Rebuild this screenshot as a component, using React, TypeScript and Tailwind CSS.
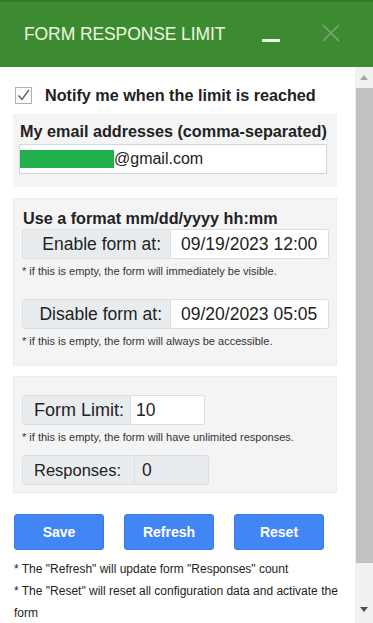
import React from "react";

const font = { fontFamily: '"Liberation Sans", Arial, sans-serif' };

function Group({ label, value, labelCls, valueCls }: { label: string; value: string; labelCls: string; valueCls: string }) {
  return (
    <div className="flex h-[30px] text-[#222] whitespace-nowrap">
      <div className={`${labelCls} shrink-0 flex items-center bg-[#e9ecef] border border-[#dcdfe2] rounded-l-[3px]`}>
        {label}
      </div>
      <div className={`${valueCls} shrink-0 flex items-center border border-l-0 border-[#dcdfe2] rounded-r-[3px]`}>
        {value}
      </div>
    </div>
  );
}

export default function App() {
  return (
    <div className="w-[373px] h-[623px] overflow-hidden bg-white flex flex-col" style={font}>
      <div className="h-[67px] shrink-0 bg-[#3d8b30] border-t-2 border-[#347a29] flex items-center pl-6 pr-[32px]">
        <div className="text-[17.5px] text-[#eef7e2] tracking-[-0.1px] mt-[-1px]">FORM RESPONSE LIMIT</div>
        <div className="flex-1" />
        <div className="w-[18px] h-[3px] bg-[#eef7e2] mt-[12px] mr-[41px]" />
        <svg width="20" height="20" viewBox="0 0 20 20" className="mt-[-3px]">
          <path d="M2 2 L18 18 M18 2 L2 18" stroke="#7fa57a" strokeWidth="1.6" />
        </svg>
      </div>
      <div className="flex flex-1 min-h-0">
        <div className="w-[355px] overflow-hidden text-[#222]">
          <div className="flex items-center h-[19px] mt-[19px] ml-[15px]">
            <svg width="18" height="18" viewBox="0 0 18 18">
              <rect x="0.5" y="0.5" width="16" height="16" fill="#fbfbfb" stroke="#b0b0b0" />
              <path d="M3.5 8.5 L7 12.5 L14 3" fill="none" stroke="#606060" strokeWidth="1.4" />
            </svg>
            <span className="ml-[12px] text-[16.2px] font-bold">Notify me when the limit is reached</span>
          </div>
          <div className="mx-[13px] mt-[9px] w-[324px] h-[73px] bg-[#f4f4f4] pl-[6px] pt-[7px]">
            <div className="text-[16.2px] font-bold ml-[1px] leading-[20px] whitespace-nowrap">My email addresses (comma-separated)</div>
            <div className="mt-[3px] w-[308px] h-[30px] bg-white border border-[#d6d6d6] flex items-center text-[16px]">
              <div className="w-[94px] h-[18px] bg-[#21b04b]" />
              <span>@gmail.com</span>
            </div>
          </div>
          <div className="mx-[13px] mt-[11px] w-[324px] h-[168px] bg-[#f4f4f4] border border-[#ececec] pl-[8px] pt-[9px]">
            <div className="text-[16.2px] font-bold leading-[20px] ml-[1px]">Use a format mm/dd/yyyy hh:mm</div>
            <div className="mt-[1px]">
              <Group label="Enable form at:" value="09/19/2023 12:00" labelCls="w-[149px] justify-end pr-[9px] text-[17.5px]" valueCls="w-[158px] pl-[10px] bg-white text-[17.5px]" />
            </div>
            <div className="text-[11px] text-[#333] mt-[5px] leading-[14px]">* if this is empty, the form will immediately be visible.</div>
            <div className="mt-[21px]">
              <Group label="Disable form at:" value="09/20/2023 05:05" labelCls="w-[149px] justify-end pr-[8px] text-[17.5px]" valueCls="w-[158px] pl-[10px] bg-white text-[17.5px]" />
            </div>
            <div className="text-[11px] text-[#333] mt-[5px] leading-[14px]">* if this is empty, the form will always be accessible.</div>
          </div>
          <div className="mx-[13px] mt-[10px] w-[324px] h-[117px] bg-[#f4f4f4] border border-[#ececec] pl-[8px] pt-[18px]">
            <Group label="Form Limit:" value="10" labelCls="w-[109px] pl-[11px] text-[18px]" valueCls="w-[74px] pl-[5px] bg-white text-[17.5px]" />
            <div className="text-[11px] text-[#333] mt-[5px] leading-[14px]">* if this is empty, the form will have unlimited responses.</div>
            <div className="mt-[11px]">
              <Group label="Responses:" value="0" labelCls="w-[113px] pl-[11px] text-[16.5px]" valueCls="w-[74px] pl-[7px] bg-[#e9ecef] text-[17.5px]" />
            </div>
          </div>
          <div className="flex mt-[21px] ml-[14px] gap-[20px]">
            {["Save", "Refresh", "Reset"].map((t) => (
              <div key={t} className="w-[90px] h-[36px] rounded-[3px] bg-[#4285f4] border border-[#3b78e0] text-white font-bold text-[14px] flex items-center justify-center">
                {t}
              </div>
            ))}
          </div>
          <div className="ml-[14px] mt-[8px] text-[12px] text-[#222] leading-[22px] whitespace-nowrap">
            <div>* The "Refresh" will update form "Responses" count</div>
            <div>* The "Reset" will reset all configuration data and activate the</div>
            <div>form</div>
          </div>
        </div>
        <div className="w-[18px] bg-[#f1f1f1] flex flex-col items-center">
          <div className="h-[21px] flex items-center justify-center">
            <svg width="8" height="5" viewBox="0 0 8 5"><path d="M0 5 L4 0 L8 5 Z" fill="#a3a3a3" /></svg>
          </div>
          <div className="w-[17px] h-[475px] bg-[#c1c1c1] ml-[1px]" />
          <div className="flex-1" />
          <div className="h-[20px] flex items-start justify-center pt-[4px]">
            <svg width="8" height="5" viewBox="0 0 8 5"><path d="M0 0 L8 0 L4 5 Z" fill="#505050" /></svg>
          </div>
        </div>
      </div>
    </div>
  );
}
